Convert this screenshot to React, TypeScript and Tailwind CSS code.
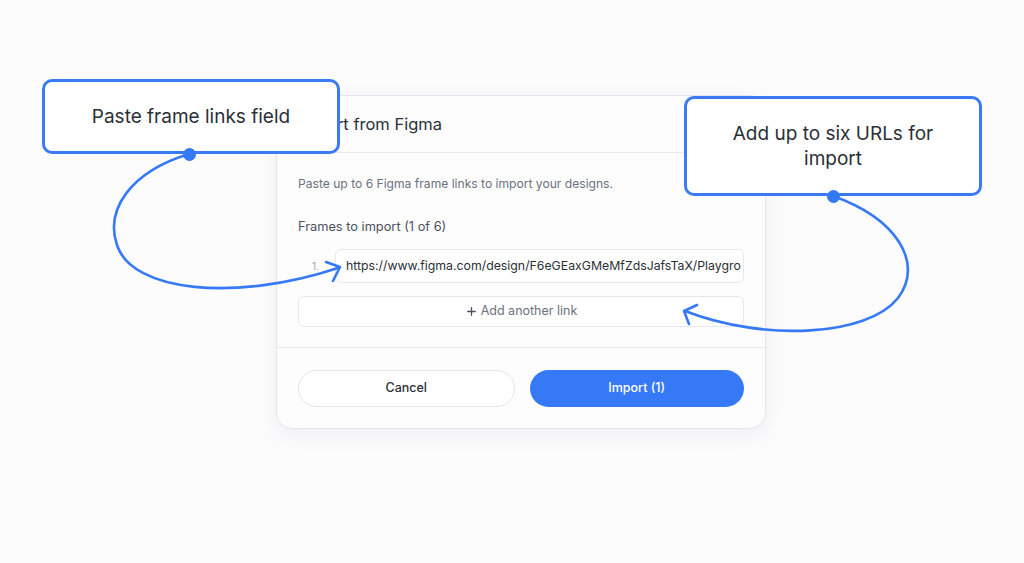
import { Plus } from 'lucide-react';

function Callout({ className, children }: { className: string; children: React.ReactNode }) {
  return (
    <div
      className={`absolute flex items-center justify-center rounded-[10px] border-[3px] border-[#3a7af5] bg-white text-center text-[19px] leading-[25px] text-[#2b2f36] ${className}`}
    >
      {children}
    </div>
  );
}

export default function App() {
  return (
    <div
      className="relative h-[563px] w-[1024px] overflow-hidden bg-[#fcfcfd] pl-[276px] pt-[95px]"
      style={{ fontFamily: 'Inter, "Noto Sans", sans-serif' }}
    >
      <div className="w-[490px] rounded-[16px] border border-[#e3e5ee] bg-[#fdfdfe] shadow-[0_6px_24px_rgba(30,40,90,0.06)]">
        <div className="flex h-[57px] items-center border-b border-[#e6e8ef] px-[21px]">
          <h2 className="text-[16.5px] text-[#2b2f36]">Import from Figma</h2>
        </div>

        <div className="px-[21px] pb-[20px] pt-[22px]">
          <p className="text-[12.1px] leading-[18px] text-[#6b7280]">
            Paste up to 6 Figma frame links to import your designs.
          </p>
          <p className="mt-[25px] text-[12.8px] leading-[18px] text-[#4b5160]">Frames to import (1 of 6)</p>

          <div className="mt-[13px] flex items-center">
            <span className="w-[37px] pl-[14px] text-[10px] text-[#9ca3af]">1.</span>
            <div className="flex h-[34px] flex-1 items-center overflow-hidden whitespace-nowrap rounded-[6px] border border-[#e6e8ee] bg-white pl-[10px] text-[12.3px] text-[#2b2f36]">
              https://www.figma.com/design/F6eGEaxGMeMfZdsJafsTaX/Playgro
            </div>
          </div>

          <button className="mt-[13px] flex h-[31px] w-full items-center justify-center gap-[3px] rounded-[6px] border border-[#e6e8ee] bg-white text-[12.5px] text-[#6b7280]">
            <Plus className="h-[13px] w-[13px] text-[#4b5160]" strokeWidth={2.4} />
            Add another link
          </button>
        </div>

        <div className="flex gap-[15px] border-t border-[#e6e8ef] px-[21px] pb-[21px] pt-[22px]">
          <button className="h-[37px] flex-1 rounded-full border border-[#e3e5ec] bg-white text-[12.5px] font-medium text-[#2b2f36]">
            Cancel
          </button>
          <button className="h-[37px] flex-1 rounded-full bg-[#3579f6] text-[12.5px] font-medium text-white">
            Import (1)
          </button>
        </div>
      </div>

      <svg className="pointer-events-none absolute left-0 top-0" width="1024" height="563" fill="none">
        <g stroke="#3579f6" strokeWidth="2.6" strokeLinecap="round" strokeLinejoin="round">
          <path d="M189,154 C130,172 105,210 117,245 C132,292 235,302 338,268" />
          <path d="M326,262 L340,267 L333,281" />
          <path d="M833,196 C895,218 925,262 898,298 C868,336 765,342 685,311" />
          <path d="M697,305 L684,311 L689,324" />
        </g>
      </svg>

      <Callout className="left-[42px] top-[79px] h-[75px] w-[298px]">Paste frame links field</Callout>
      <Callout className="left-[684px] top-[96px] h-[100px] w-[298px]">
        Add up to six URLs for
        <br />
        import
      </Callout>

      <span className="absolute left-[183px] top-[148px] h-[13px] w-[13px] rounded-full bg-[#3579f6]" />
      <span className="absolute left-[827px] top-[190px] h-[13px] w-[13px] rounded-full bg-[#3579f6]" />
    </div>
  );
}
